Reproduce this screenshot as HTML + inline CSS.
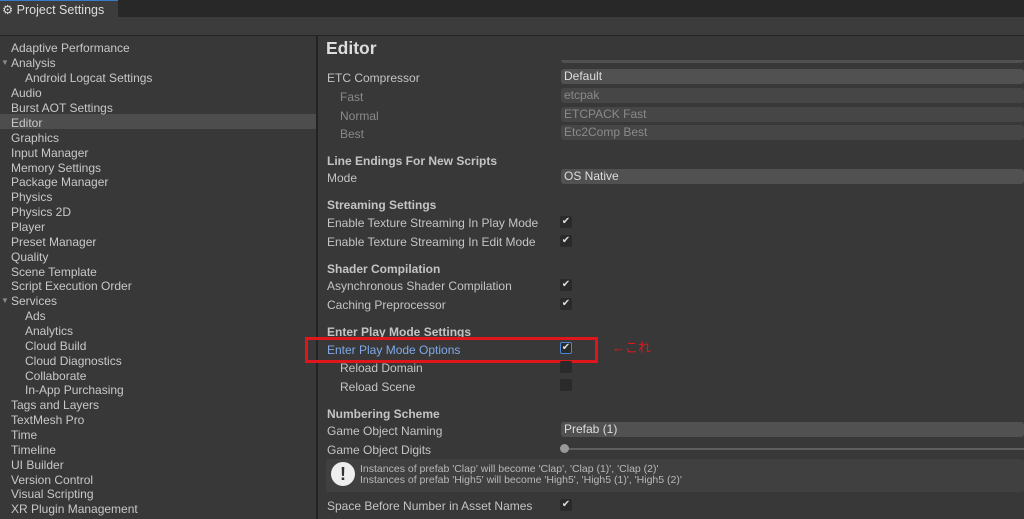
<!DOCTYPE html><html><head><style>
body{margin:0;width:1024px;height:519px;background:#383838;font-family:"Liberation Sans","Noto Sans CJK JP",sans-serif;color:#c4c4c4;font-size:12px;overflow:hidden;position:relative}
.a{position:absolute;white-space:nowrap}
.top{left:0;top:0;width:1024px;height:17px;background:#282828}
.tab{left:0;top:0;width:118px;height:17px;background:#3c3c3c;border-top:1px solid #3a78c9;box-sizing:border-box}
.tb{left:0;top:17px;width:1024px;height:18px;background:#3c3c3c;border-bottom:1px solid #232323}
.sep{left:316px;top:36px;width:2px;height:483px;background:#232323}
.l{left:11px;font-size:12px;color:#c8c8c8;margin-top:1px}
.f{left:561px;width:463px;height:15px;background:#515151;border-radius:3px;color:#ddd;padding-left:3px;box-sizing:border-box;font-size:12px;line-height:15px}
.fd{background:#464646;color:#8a8a8a}
.r{left:327px;font-size:12px;margin-top:1px}
.h{font-weight:bold}
.d{color:#8a8a8a}
.cb{left:560px;width:12px;height:12px;background:#2a2a2a;border-radius:2px;color:#ddd;font-size:10px;line-height:12px;text-align:center}
</style></head><body>
<div class="a top"></div><div class="a tab"></div>
<div class="a" style="left:2px;top:2px;font-size:12.5px;color:#ddd">⚙ Project Settings</div>
<div class="a tb"></div>
<div class="a" style="left:0;top:114px;width:316px;height:15px;background:#4d4d4d"></div>
<div class="a sep"></div>
<div class="a l" style="top:40px">Adaptive Performance</div>
<div class="a l" style="top:55px">Analysis</div><div class="a" style="left:1px;top:58px;font-size:8px;color:#888">▼</div>
<div class="a l" style="top:70px;left:25px">Android Logcat Settings</div>
<div class="a l" style="top:85px">Audio</div>
<div class="a l" style="top:100px">Burst AOT Settings</div>
<div class="a l" style="top:115px">Editor</div>
<div class="a l" style="top:130px">Graphics</div>
<div class="a l" style="top:145px">Input Manager</div>
<div class="a l" style="top:160px">Memory Settings</div>
<div class="a l" style="top:174px">Package Manager</div>
<div class="a l" style="top:189px">Physics</div>
<div class="a l" style="top:204px">Physics 2D</div>
<div class="a l" style="top:219px">Player</div>
<div class="a l" style="top:234px">Preset Manager</div>
<div class="a l" style="top:249px">Quality</div>
<div class="a l" style="top:264px">Scene Template</div>
<div class="a l" style="top:278px">Script Execution Order</div>
<div class="a l" style="top:293px">Services</div><div class="a" style="left:1px;top:296px;font-size:8px;color:#888">▼</div>
<div class="a l" style="top:308px;left:25px">Ads</div>
<div class="a l" style="top:323px;left:25px">Analytics</div>
<div class="a l" style="top:338px;left:25px">Cloud Build</div>
<div class="a l" style="top:353px;left:25px">Cloud Diagnostics</div>
<div class="a l" style="top:368px;left:25px">Collaborate</div>
<div class="a l" style="top:382px;left:25px">In-App Purchasing</div>
<div class="a l" style="top:397px">Tags and Layers</div>
<div class="a l" style="top:412px">TextMesh Pro</div>
<div class="a l" style="top:427px">Time</div>
<div class="a l" style="top:442px">Timeline</div>
<div class="a l" style="top:457px">UI Builder</div>
<div class="a l" style="top:472px">Version Control</div>
<div class="a l" style="top:486px">Visual Scripting</div>
<div class="a l" style="top:501px">XR Plugin Management</div>

<div class="a f" style="top:53px;height:10px"></div>
<div class="a" style="left:318px;top:36px;width:706px;height:24px;background:#383838"></div>
<div class="a" style="left:326px;top:38px;font-size:17.5px;font-weight:bold;color:#ddd">Editor</div>
<div class="a r" style="top:70px">ETC Compressor</div><div class="a f" style="top:69px">Default</div>
<div class="a r d" style="top:89px;left:340px">Fast</div><div class="a f fd" style="top:88px">etcpak</div>
<div class="a r d" style="top:108px;left:340px">Normal</div><div class="a f fd" style="top:107px">ETCPACK Fast</div>
<div class="a r d" style="top:126px;left:340px">Best</div><div class="a f fd" style="top:125px">Etc2Comp Best</div>
<div class="a r h" style="top:153px">Line Endings For New Scripts</div>
<div class="a r" style="top:170px">Mode</div><div class="a f" style="top:169px">OS Native</div>
<div class="a r h" style="top:197px">Streaming Settings</div>
<div class="a r" style="top:215px">Enable Texture Streaming In Play Mode</div><div class="a cb" style="top:216px">✔</div>
<div class="a r" style="top:234px">Enable Texture Streaming In Edit Mode</div><div class="a cb" style="top:235px">✔</div>
<div class="a r h" style="top:261px">Shader Compilation</div>
<div class="a r" style="top:278px">Asynchronous Shader Compilation</div><div class="a cb" style="top:279px">✔</div>
<div class="a r" style="top:297px">Caching Preprocessor</div><div class="a cb" style="top:298px">✔</div>
<div class="a r h" style="top:324px">Enter Play Mode Settings</div>
<div class="a r" style="top:342px;color:#7fa9e8">Enter Play Mode Options</div><div class="a cb" style="top:342px;border:1px solid #4a85d4;width:10px;height:10px;line-height:10px">✔</div>
<div class="a" style="left:305px;top:337px;width:287px;height:20px;border:3px solid #e0161d"></div>
<div class="a" style="left:612px;top:337px;color:#e0161d;font-size:13px">←これ</div>
<div class="a r" style="top:360px;left:340px">Reload Domain</div><div class="a cb" style="top:361px"></div>
<div class="a r" style="top:379px;left:340px">Reload Scene</div><div class="a cb" style="top:379px"></div>
<div class="a r h" style="top:406px">Numbering Scheme</div>
<div class="a r" style="top:423px">Game Object Naming</div><div class="a f" style="top:422px">Prefab (1)</div>
<div class="a r" style="top:442px">Game Object Digits</div>
<div class="a" style="left:565px;top:448px;width:459px;height:2px;background:#5e5e5e"></div>
<div class="a" style="left:560px;top:444px;width:9px;height:9px;border-radius:50%;background:#999"></div>
<div class="a" style="left:326px;top:459px;width:698px;height:33px;background:#404040;border-radius:3px"></div>
<div class="a" style="left:331px;top:462px;width:24px;height:24px;border-radius:50%;background:#eee;color:#333;font-weight:bold;font-size:18px;text-align:center;line-height:24px">!</div>
<div class="a" style="left:360px;top:464px;font-size:10.5px;color:#b8b8b8;line-height:11px">Instances of prefab 'Clap' will become 'Clap', 'Clap (1)', 'Clap (2)'<br>Instances of prefab 'High5' will become 'High5', 'High5 (1)', 'High5 (2)'</div>
<div class="a r" style="top:498px">Space Before Number in Asset Names</div><div class="a cb" style="top:499px">✔</div>
</body></html>
